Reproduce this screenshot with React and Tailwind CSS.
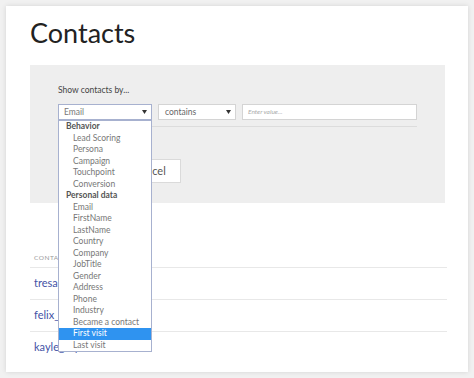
import React from "react";

const behavior = ["Lead Scoring", "Persona", "Campaign", "Touchpoint", "Conversion"];
const personal = [
  "Email",
  "FirstName",
  "LastName",
  "Country",
  "Company",
  "JobTitle",
  "Gender",
  "Address",
  "Phone",
  "Industry",
  "Became a contact",
  "First visit",
  "Last visit",
];

function Caret() {
  return (
    <svg width="5" height="4" viewBox="0 0 5 4" className="shrink-0">
      <path d="M0 0h5L2.5 4z" fill="#333" />
    </svg>
  );
}

function FieldMenu() {
  return (
    <div className="absolute left-0 top-full z-10 w-[94px] border border-[#a7b1cf] bg-white text-[8.5px] leading-[11.5px]">
      <div className="pl-[7px] font-bold text-[#555]">Behavior</div>
      {behavior.map((item) => (
        <div key={item} className="pl-[14px] text-[#777]">
          {item}
        </div>
      ))}
      <div className="pl-[7px] font-bold text-[#555]">Personal data</div>
      {personal.map((item) => (
        <div
          key={item}
          className={
            item === "First visit"
              ? "bg-[#2f93f0] pl-[14px] text-white"
              : "pl-[14px] text-[#777]"
          }
        >
          {item}
        </div>
      ))}
    </div>
  );
}

export default function App() {
  const contacts = ["tresa_moss", "felix_lind", "kayle_roy"];

  return (
    <div className="min-h-screen bg-[#f1f1f1] p-[6px] font-['Lato',sans-serif]">
      <div className="h-[366px] w-[462px] bg-white pl-[24px] pt-[11px] shadow-[0_0_5px_rgba(0,0,0,0.12)]">
        <h1 className="text-[27px] leading-[32px] text-[#222]">Contacts</h1>

        <div className="mt-[16px] h-[138px] w-[415px] bg-[#eeeeee] pl-[28px] pt-[19px]">
          <p className="text-[8.5px] leading-[12px] text-[#444]">Show contacts by...</p>

          <div className="mt-[8px] flex gap-[6px]">
            <div className="relative">
              <div className="flex h-[16px] w-[94px] items-center justify-between border border-[#a7b1cf] bg-white pl-[5px] pr-[4px] text-[8.5px] text-[#777]">
                Email
                <Caret />
              </div>
              <FieldMenu />
            </div>
            <div className="flex h-[16px] w-[78px] items-center justify-between border border-[#d4d4d4] bg-white pl-[6px] pr-[4px] text-[8.5px] text-[#666]">
              contains
              <Caret />
            </div>
            <div className="flex h-[16px] w-[175px] items-center border border-[#d4d4d4] bg-white pl-[5px] text-[6.5px] italic text-[#aaa]">
              Enter value...
            </div>
          </div>

          <div className="mt-[6px] w-[359px] border-t border-[#dcdcdc]" />

          <div className="ml-[60px] mt-[32px] flex h-[24px] w-[63px] items-center justify-center border border-[#dadada] bg-white text-[11px] text-[#555]">
            Cancel
          </div>
        </div>

        <div className="mt-[50px] w-[417px]">
          <div className="pb-[4px] pl-[4px] text-[6.5px] uppercase tracking-[0.5px] text-[#999]">
            Contact
          </div>
          {contacts.map((name) => (
            <div
              key={name}
              className="flex h-[32px] items-center border-t border-[#e8e8e8] pl-[4px] text-[11px] text-[#4453a6]"
            >
              {name}
            </div>
          ))}
        </div>
      </div>
    </div>
  );
}
